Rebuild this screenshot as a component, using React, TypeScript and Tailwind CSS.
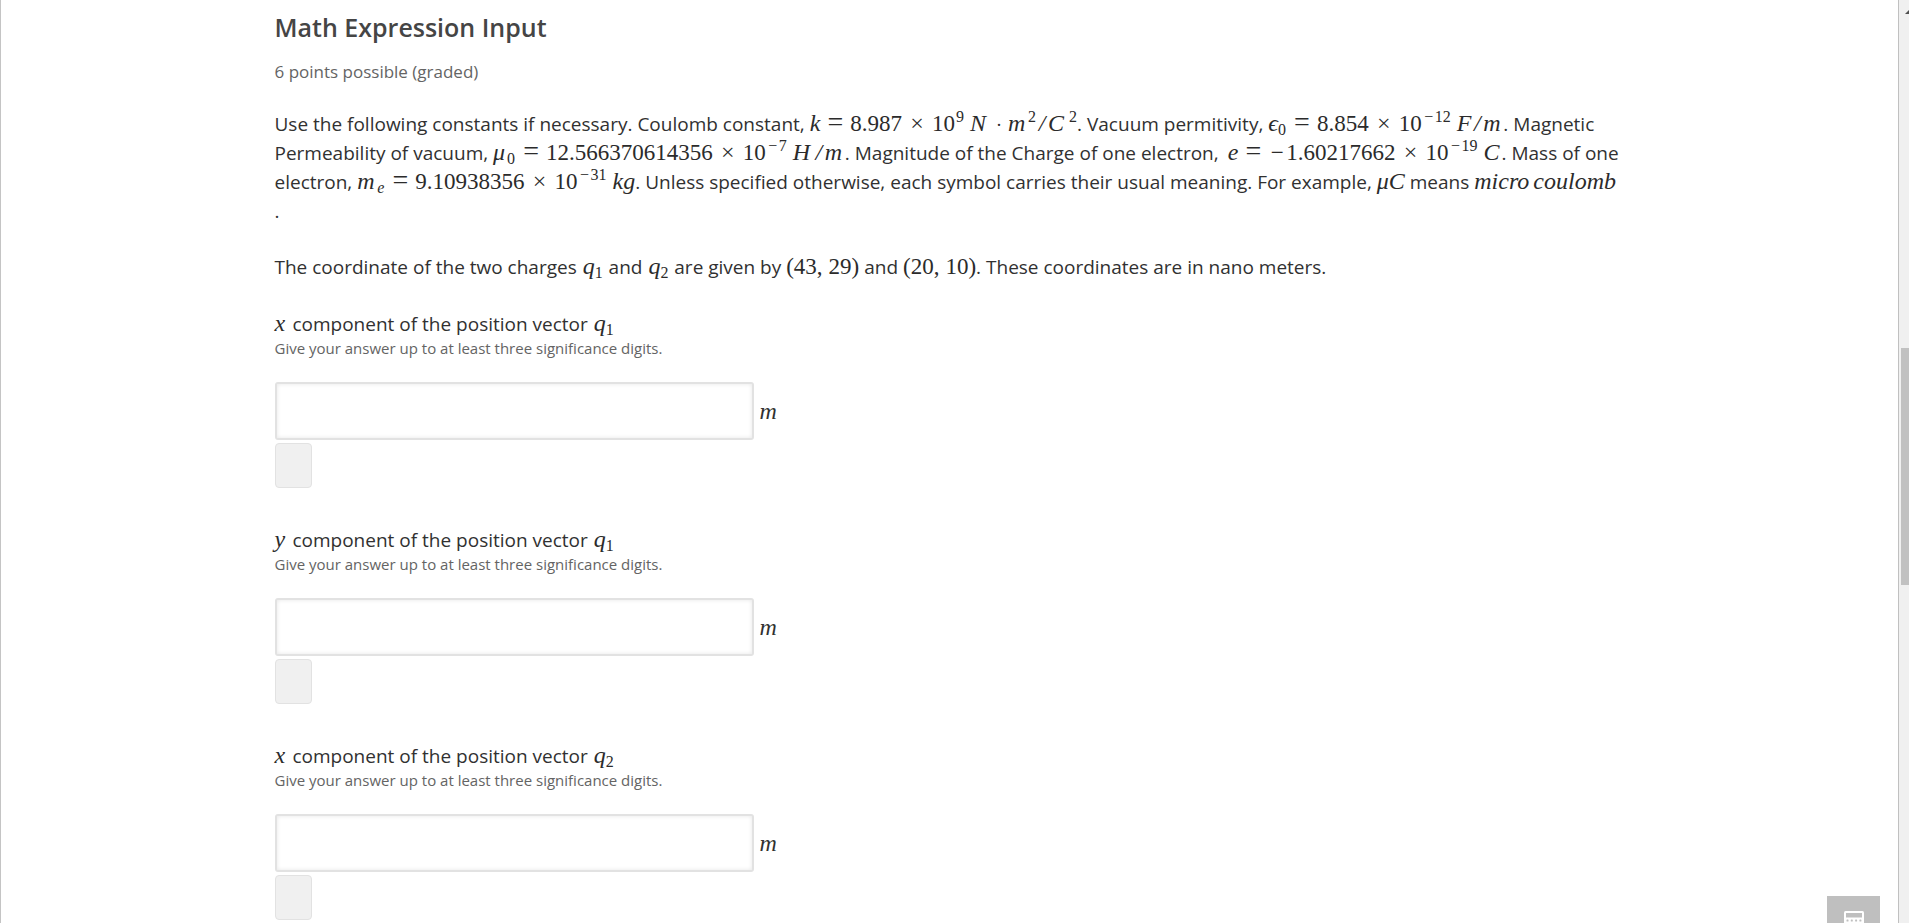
import type { ReactNode } from "react";

/* Math atoms: upright numbers, italic symbols, operators and scripts. */
function Num({ children }: { children: ReactNode }) {
  return <span className="font-['Liberation_Serif',serif] text-[23px] leading-none">{children}</span>;
}

function Sym({ children, className = "" }: { children: ReactNode; className?: string }) {
  return (
    <i className={`inline-block font-['Liberation_Serif',serif] text-2xl leading-none ${className}`}>{children}</i>
  );
}

function Equals() {
  return (
    <span className="inline-block w-[30px] text-center font-['Liberation_Serif',serif] text-[28px] leading-[0]">
      =
    </span>
  );
}

function Times() {
  return (
    <span className="inline-block w-[30px] text-center font-['Liberation_Serif',serif] text-2xl leading-none">×</span>
  );
}

function Slash() {
  return <Sym className="w-3 text-center">/</Sym>;
}

function Sup({ children }: { children: ReactNode }) {
  return (
    <sup className="top-0 ml-px align-[9px] font-['Liberation_Serif',serif] text-base leading-[0]">{children}</sup>
  );
}

function Sub({ children }: { children: ReactNode }) {
  return (
    <sub className="bottom-0 mr-px align-[-4px] font-['Liberation_Serif',serif] text-base leading-[0]">{children}</sub>
  );
}

function Neg() {
  return <span className="inline-block w-3 text-center">−</span>;
}

function Math({ children }: { children: ReactNode }) {
  return <span className="whitespace-nowrap text-[#2b2b2b]">{children}</span>;
}

function Charge({ index }: { index: number }) {
  return (
    <Math>
      <Sym className="ml-px">q</Sym>
      <Sub>{index}</Sub>
    </Math>
  );
}

function Point({ x, y }: { x: number; y: number }) {
  return (
    <Math>
      <Num>
        ({x},<span className="ml-[6px]">{y})</span>
      </Num>
    </Math>
  );
}

function Problem({ id, axis, index }: { id: string; axis: string; index: number }) {
  return (
    <section className="mb-[38px]">
      <label htmlFor={id} className="block leading-[29px]">
        <Math>
          <Sym className="w-[13px]">{axis}</Sym>
        </Math>{" "}
        component of the position vector <Charge index={index} />
      </label>
      <p id={`${id}-hint`} className="text-[15px] leading-[18px] text-[#646464]">
        Give your answer up to at least three significance digits.
      </p>
      <div className="mt-[25px] flex items-center">
        <input
          id={id}
          type="text"
          aria-describedby={`${id}-hint`}
          className="h-[58px] w-[479px] rounded-[3px] border-2 border-[#e2e2e2] bg-white px-3 shadow-[inset_0_0_4px_rgba(0,0,0,0.1)] outline-none"
        />
        <Sym className="ml-[6px]">m</Sym>
      </div>
      <button
        type="button"
        aria-label="Answer status"
        className="mt-[3px] block h-[45px] w-[37px] rounded-[4px] border border-[#e2e2e2] bg-[#f0f0f0]"
      />
    </section>
  );
}

export default function App() {
  return (
    <div className="flex h-screen overflow-hidden border-l border-[#c4c4c4] bg-white font-['Open_Sans','Noto_Sans',sans-serif] text-[19px] text-[#313131]">
      <main className="min-w-0 flex-1 px-8">
        <div className="mx-auto max-w-[1350px]">
          <h1 className="pt-[7px] text-[25px] leading-10 font-semibold text-[#454545]">Math Expression Input</h1>
          <p className="mt-3 text-[17px] leading-[26px] text-[#646464]">6 points possible (graded)</p>

          <p className="mt-[25px] leading-[29px]">
            Use the following constants if necessary. Coulomb constant,{" "}
            <Math>
              <Sym>k</Sym>
              <Equals />
              <Num>8.987</Num>
              <Times />
              <Num>10</Num>
              <Sup>9</Sup>
              <Sym className="ml-[6px] w-5">N</Sym>
              <span className="inline-block w-[18px] text-center">·</span>
              <Sym className="w-[19px]">m</Sym>
              <Sup>2</Sup>
              <Slash />
              <Sym className="w-5">C</Sym>
              <Sup>2</Sup>
            </Math>
            . Vacuum permitivity,{" "}
            <Math>
              <Sym>ϵ</Sym>
              <Sub>0</Sub>
              <Equals />
              <Num>8.854</Num>
              <Times />
              <Num>10</Num>
              <Sup>
                <Neg />
                12
              </Sup>
              <Sym className="ml-[6px]">F</Sym>
              <Slash />
              <Sym className="w-5">m</Sym>
            </Math>
            . Magnetic
            <br />
            Permeability of vacuum,{" "}
            <Math>
              <Sym className="w-[14px]">μ</Sym>
              <Sub>0</Sub>
              <Equals />
              <Num>12.566370614356</Num>
              <Times />
              <Num>10</Num>
              <Sup>
                <Neg />7
              </Sup>
              <Sym className="ml-[6px] w-5">H</Sym>
              <Slash />
              <Sym className="w-5">m</Sym>
            </Math>
            . Magnitude of the Charge of one electron,{" "}
            <Math>
              <Sym className="ml-1">e</Sym>
              <Equals />
              <Num>
                <span className="inline-block w-[18px] text-center">−</span>
                1.60217662
              </Num>
              <Times />
              <Num>10</Num>
              <Sup>
                <Neg />
                19
              </Sup>
              <Sym className="ml-[6px] w-[18px]">C</Sym>
            </Math>
            . Mass of one
            <br />
            electron,{" "}
            <Math>
              <Sym className="w-5">m</Sym>
              <Sub>
                <i>e</i>
              </Sub>
              <Equals />
              <Num>9.10938356</Num>
              <Times />
              <Num>10</Num>
              <Sup>
                <Neg />
                31
              </Sup>
              <Sym className="ml-[6px]">kg</Sym>
            </Math>
            . Unless specified otherwise, each symbol carries their usual meaning. For example,{" "}
            <Math>
              <Sym>μC</Sym>
            </Math>{" "}
            means{" "}
            <Math>
              <Sym>micro</Sym>
              <Sym className="ml-1">coulomb</Sym>
            </Math>
            <br />.
          </p>

          <p className="mt-[27px] leading-[29px]">
            The coordinate of the two charges <Charge index={1} /> and <Charge index={2} /> are given by{" "}
            <Point x={43} y={29} /> and <Point x={20} y={10} />. These coordinates are in nano meters.
          </p>

          <form className="mt-7">
            <Problem id="q1-x" axis="x" index={1} />
            <Problem id="q1-y" axis="y" index={1} />
            <Problem id="q2-x" axis="x" index={2} />
          </form>
        </div>
      </main>

      <button
        type="button"
        aria-label="Open calculator"
        className="fixed right-[29px] bottom-0 flex h-[27px] w-[53px] items-start justify-center overflow-hidden bg-[#bfbfbf] pt-[15px]"
      >
        <svg width="20" height="28" viewBox="0 0 20 28" className="shrink-0" aria-hidden="true">
          <rect width="20" height="28" rx="1.5" fill="#fff" />
          <rect x="2" y="2" width="16" height="4.5" fill="#bfbfbf" />
          <g fill="#bfbfbf">
            {[2.5, 6.8, 11.1, 15.4].map((x) => (
              <rect key={x} x={x} y="8.5" width="2" height="2" rx="0.6" />
            ))}
            {[2.5, 6.8, 11.1, 15.4].map((x) => (
              <rect key={x} x={x} y="12.5" width="2" height="2" rx="0.6" />
            ))}
          </g>
        </svg>
      </button>

      <div className="w-[11px] shrink-0 border-l border-[#c0c0c0] bg-[#f0f0f0]" aria-hidden="true">
        <svg width="10" height="20" viewBox="0 0 10 20" className="block">
          <path d="M6 14L10 10V14Z" fill="#505050" />
        </svg>
        <div className="mt-[328px] ml-[2px] h-[237px] bg-[#c1c1c1]" />
      </div>
    </div>
  );
}
